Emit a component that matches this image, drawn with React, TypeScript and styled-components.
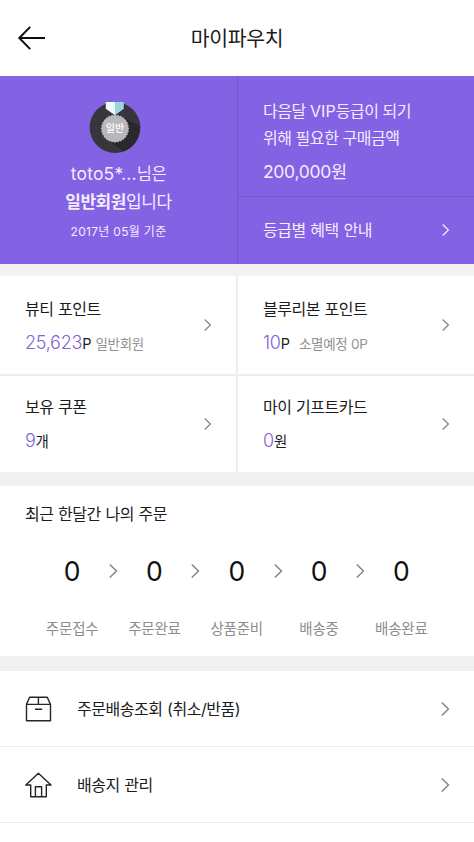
import React from "react";
import styled, { createGlobalStyle } from "styled-components";

const GlobalStyle = createGlobalStyle`
  * { box-sizing: border-box; }
  body {
    margin: 0;
    background: #fff;
    color: #1c1c1c;
    font-family: "Inter", "Noto Sans CJK KR", sans-serif;
  }
`;

const Screen = styled.div`
  width: 474px;
  height: 842px;
  overflow: hidden;
  background: #fff;
`;

const Header = styled.header`
  display: grid;
  grid-template-columns: 60px 1fr 60px;
  align-items: center;
  height: 76px;
`;

const BackButton = styled.button`
  display: flex;
  border: 0;
  padding: 0 0 0 17px;
  background: none;
  color: #0c0c0c;
`;

const Text = styled.span<{
  $size: number;
  $line?: number;
  $gap?: number;
  $word?: number;
  $color?: string;
  $weight?: number;
}>`
  display: block;
  white-space: nowrap;
  font-size: ${(p) => p.$size}px;
  line-height: ${(p) => p.$line ?? 24}px;
  letter-spacing: ${(p) => p.$gap ?? 0}px;
  word-spacing: ${(p) => p.$word ?? 0}px;
  color: ${(p) => p.$color ?? "inherit"};
  font-weight: ${(p) => p.$weight ?? 400};
`;

const Title = styled(Text).attrs({ as: "h1" })`
  margin: 0;
  padding-top: 1px;
  text-align: center;
`;

const Hero = styled.section`
  display: grid;
  grid-template-columns: 237px 237px;
  height: 188px;
  background: #8362e4;
  color: #f3ecff;
`;

const Membership = styled.div`
  display: flex;
  flex-direction: column;
  align-items: center;
  padding: 25px 0 0;
`;

const MedalSlot = styled.div`
  padding-right: 8px;
`;

const MemberLines = styled.div`
  display: flex;
  flex-direction: column;
  align-items: center;
  padding-top: 8px;
  gap: 4px;
`;

const Latin = styled.span<{ $gap: number; $size?: number }>`
  letter-spacing: ${(p) => p.$gap}px;
  font-size: ${(p) => (p.$size ? `${p.$size}px` : "inherit")};
`;

const Benefits = styled.div`
  display: grid;
  grid-template-rows: 121px 67px;
  border-left: 1px solid #7654d4;
`;

const NextGrade = styled.div`
  padding: 22px 0 0 25px;
  border-bottom: 1px solid #7654d4;
`;

const Amount = styled(Text)`
  margin-top: 8px;
`;

const BenefitLink = styled.a`
  display: flex;
  align-items: center;
  justify-content: space-between;
  padding: 0 25px 2px 25px;
`;

const Divider = styled.div<{ $height: number; $color?: string }>`
  height: ${(p) => p.$height}px;
  background: ${(p) => p.$color ?? "#f0f0f0"};
`;

const Wallet = styled.section`
  display: grid;
  grid-template-columns: 238px 236px;
  grid-template-rows: 100px 96px;
`;

const WalletCell = styled.a<{ $right?: boolean; $bottom?: boolean }>`
  display: flex;
  align-items: center;
  justify-content: space-between;
  padding: 0 25px;
  border-right: ${(p) => (p.$right ? "0" : "2px solid #eeeeee")};
  border-bottom: ${(p) => (p.$bottom ? "0" : "2px solid #ececec")};
`;

const WalletText = styled.div<{ $bottom?: boolean }>`
  align-self: flex-start;
  padding-top: ${(p) => (p.$bottom ? 19 : 21)}px;
`;

const ValueLine = styled.div`
  display: flex;
  align-items: baseline;
  height: 24px;
  margin-top: 10px;
`;

const Note = styled(Text)<{ $left: number }>`
  margin-left: ${(p) => p.$left}px;
`;

const Orders = styled.section`
  height: 170px;
  padding: 16px 0 0 25px;
`;

const Steps = styled.div`
  display: flex;
  align-items: center;
  margin-top: 29px;
  padding-left: 6px;
`;

const Count = styled(Text)`
  width: 82.3px;
  text-align: center;
`;

const StepSlot = styled.div`
  display: flex;
  align-items: center;
  width: 82.3px;
`;

const StepArrow = styled.div`
  display: flex;
  justify-content: center;
  width: 0;
`;

const StepLabels = styled.div`
  display: flex;
  margin-top: 30px;
  padding-left: 6px;
`;

const MenuRow = styled.a`
  display: grid;
  grid-template-columns: 52px 1fr auto;
  align-items: center;
  height: 76px;
  padding: 0 25px;
  border-bottom: 1px solid #ededed;
`;

const Svg = styled.svg`
  display: block;
  flex: none;
  overflow: visible;
`;

function Chevron({ color = "#858585", size = 12 }: { color?: string; size?: number }) {
  return (
    <Svg width={size * 0.6} height={size} viewBox="0 0 7.2 12" fill="none" stroke={color} strokeWidth="1.25">
      <path d="M0.7 0.5 6.4 6 0.7 11.5" />
    </Svg>
  );
}

function Medal() {
  const teeth = Array.from({ length: 56 }, (_, i) => {
    const r = i % 2 ? 13.2 : 14.3;
    const a = (i / 56) * Math.PI * 2;
    return `${(26 + r * Math.cos(a)).toFixed(2)},${(27.6 + r * Math.sin(a)).toFixed(2)}`;
  }).join(" ");
  return (
    <Svg width="52" height="53" viewBox="0 0 52 53">
      <circle cx="26" cy="26.5" r="25.4" fill="#37363c" />
      <path d="M35.5 17 51 25.5A25.4 25.4 0 0 1 34.5 50.4L17 38Z" fill="#29282e" />
      <path d="M16.8 1h9.2v13.2l-9.2-6.4Z" fill="#effafb" />
      <path d="M26 1h8.8v6.8L26 14.2Z" fill="#9bd3e1" />
      <polygon points={teeth} fill="#b8b8ba" />
      <text
        x="26"
        y="31.2"
        textAnchor="middle"
        fontSize="10"
        fontWeight="500"
        fill="#fff"
        fontFamily="Noto Sans CJK KR, sans-serif"
      >
        일반
      </text>
    </Svg>
  );
}

const LABEL = { $size: 16, $gap: -0.48, $word: 0.6 };

function Cell(props: {
  label: string;
  value: string;
  unit: string;
  unitSize?: number;
  note?: string;
  noteLeft?: number;
  right?: boolean;
  bottom?: boolean;
}) {
  return (
    <WalletCell $right={props.right} $bottom={props.bottom}>
      <WalletText $bottom={props.bottom}>
        <Text {...LABEL}>{props.label}</Text>
        <ValueLine>
          <Text $size={18} $gap={-0.25} $color="#8063d8" $weight={300}>
            {props.value}
          </Text>
          <Text $size={props.unitSize ?? 14.5}>{props.unit}</Text>
          {props.note && (
            <Note $size={13.5} $gap={-0.3} $color="#929292" $left={props.noteLeft ?? 4}>
              {props.note}
            </Note>
          )}
        </ValueLine>
      </WalletText>
      <Chevron />
    </WalletCell>
  );
}

const STEPS = ["주문접수", "주문완료", "상품준비", "배송중", "배송완료"];

export default function App() {
  return (
    <>
      <GlobalStyle />
      <Screen>
        <Header>
          <BackButton aria-label="뒤로">
            <Svg width="29" height="24" viewBox="0 0 29 24" fill="none" stroke="currentColor" strokeWidth="2">
              <path d="M28 12H2.5M13.2 0.9 2.3 12l10.9 11.1" />
            </Svg>
          </BackButton>
          <Title $size={20.5} $gap={-0.4} $line={28}>
            마이파우치
          </Title>
        </Header>

        <Hero>
          <Membership>
            <MedalSlot>
              <Medal />
            </MedalSlot>
            <MemberLines>
              <Text $size={16.5} $gap={-0.4}>
                <Latin $gap={0.2} $size={17.5}>toto5*...</Latin>님은
              </Text>
              <Text $size={17} $gap={-0.4}>
                <b>일반회원</b>입니다
              </Text>
            </MemberLines>
            <Text $size={12} $line={36} $gap={0.3}>2017년 05월 기준</Text>
          </Membership>
          <Benefits>
            <NextGrade>
              <Text $size={16} $line={27} $gap={-0.45}>
                다음달 <Latin $gap={0.1}>VIP</Latin>등급이 되기
              </Text>
              <Text $size={16} $line={27} $gap={-0.45}>위해 필요한 구매금액</Text>
              <Amount $size={17.5} $gap={-0.3}>
                200,000원
              </Amount>
            </NextGrade>
            <BenefitLink>
              <Text {...LABEL}>등급별 혜택 안내</Text>
              <Chevron color="#f3ecff" />
            </BenefitLink>
          </Benefits>
        </Hero>

        <Divider $height={12} $color="#f3f3f4" />

        <Wallet>
          <Cell label="뷰티 포인트" value="25,623" unit="P" note="일반회원" />
          <Cell label="블루리본 포인트" value="10" unit="P" note="소멸예정 0P" noteLeft={9} right />
          <Cell label="보유 쿠폰" value="9" unit="개" bottom />
          <Cell label="마이 기프트카드" value="0" unit="원" right bottom />
        </Wallet>

        <Divider $height={14} />

        <Orders>
          <Text {...LABEL}>최근 한달간 나의 주문</Text>
          <Steps>
            {STEPS.map((name, i) => (
              <StepSlot key={name}>
                <Count $size={26.5} $line={32} $color="#111">0</Count>
                {i < STEPS.length - 1 && (
                  <StepArrow>
                    <Chevron size={14} />
                  </StepArrow>
                )}
              </StepSlot>
            ))}
          </Steps>
          <StepLabels>
            {STEPS.map((name) => (
              <Count key={name} $size={14.5} $gap={-0.2} $color="#8d8d8d">
                {name}
              </Count>
            ))}
          </StepLabels>
        </Orders>

        <Divider $height={15} />

        <MenuRow>
          <Svg width="27" height="26" viewBox="0 0 27 26" fill="none" stroke="#252525" strokeWidth="1.4" strokeLinejoin="round">
            <path d="M1.5 8.4h24v16.4h-24ZM1.5 8.4 4.6 1.3h17.6l3.3 7.1M13.4 1.3v7.1M10 13.2h7.2" />
          </Svg>
          <Text {...LABEL}>주문배송조회 (취소/반품)</Text>
          <Chevron size={14} />
        </MenuRow>
        <MenuRow>
          <Svg width="27" height="26" viewBox="0 0 27 26" fill="none" stroke="#252525" strokeWidth="1.4" strokeLinejoin="round">
            <path d="M5.7 13H.8L13.4 1.3 26 13h-4.7v11.8H5.7ZM10.4 24.8V14.7h6.2v10.1" />
          </Svg>
          <Text {...LABEL}>배송지 관리</Text>
          <Chevron size={14} />
        </MenuRow>
      </Screen>
    </>
  );
}
